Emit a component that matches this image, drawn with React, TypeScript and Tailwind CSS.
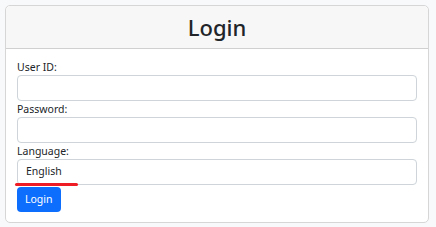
import React from "react";

export default function App() {
  return (
    <div className="min-h-screen w-full bg-[#f8f9fa] p-[5px] pr-[7px]" style={{ fontFamily: '"Noto Sans", "Open Sans", sans-serif' }}>
      <div className="rounded-[5px] border border-[#d6d6d6] bg-white">
        <div className="flex h-[43px] items-center justify-center rounded-t-[5px] border-b border-[#d0d0d0] bg-[#f7f7f7]">
          <h1 className="text-[22px] leading-none font-medium text-[#212529]">Login</h1>
        </div>
        <div className="px-[11px] pt-[10px] pb-[10px]">
          <label className="block h-[16px] text-[10.5px] leading-[16px] text-[#212529]">User ID:</label>
          <input className="block h-[26px] w-full rounded-[4px] border border-[#ced4da] bg-white outline-none" />
          <label className="block h-[16px] text-[10.5px] leading-[16px] text-[#212529]">Password:</label>
          <input type="password" className="block h-[26px] w-full rounded-[4px] border border-[#ced4da] bg-white outline-none" />
          <label className="block h-[16px] text-[10.5px] leading-[16px] text-[#212529]">Language:</label>
          <div className="relative flex h-[26px] w-full items-center rounded-[4px] border border-[#ced4da] bg-white pl-[8px] text-[10.5px] text-[#212529]">
            English
            <div className="absolute left-[-3px] top-[23px] h-[3px] w-[63px] rounded-full bg-[#ee1c25]" />
          </div>
          <button className="mt-px h-[25px] rounded-[4px] bg-[#0d6efd] px-[8px] text-[10.5px] text-white">Login</button>
        </div>
      </div>
    </div>
  );
}
